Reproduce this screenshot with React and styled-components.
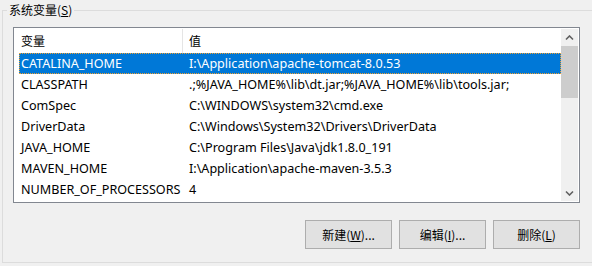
import styled, { createGlobalStyle } from 'styled-components';

const Global = createGlobalStyle`
  html, body {
    margin: 0;
    background: #f0f0f0;
    overflow: hidden;
  }
  body {
    font-family: "Noto Sans", "Noto Sans CJK SC", sans-serif;
    font-size: 12px;
    color: #000;
  }
`;

const Group = styled.fieldset`
  box-sizing: border-box;
  margin: 0 0 0 2px;
  padding: 7px 0 0 10px;
  width: 590px;
  height: 263px;
  border: 1px solid #dcdcdc;
  border-right: none;
  min-width: 0;
`;

const Legend = styled.legend`
  margin-left: -6px;
  padding: 0 2px;
  line-height: 20px;
  font-family: "Noto Sans CJK SC", sans-serif;
  font-size: 12px;
`;

const ListBox = styled.div`
  box-sizing: border-box;
  width: 567px;
  height: 176px;
  border: 1px solid #828790;
  padding: 1px;
  background: #fff;
  display: flex;
`;

const ListBody = styled.div`
  flex: 1;
  display: flex;
  flex-direction: column;
  overflow: hidden;
`;

const Header = styled.div`
  display: grid;
  grid-template-columns: 168px 1fr;
  height: 24px;
`;

const HeadCell = styled.div`
  padding-left: 6px;
  line-height: 24px;
  font-family: "Noto Sans CJK SC", sans-serif;
  border-right: ${p => (p.$sep ? '1px solid #e5e5e5' : 'none')};
  white-space: nowrap;
`;

const Row = styled.div`
  display: grid;
  grid-template-columns: 168px 1fr;
  height: 21px;
  margin-left: 4px;
  box-sizing: border-box;
  background: ${p => (p.$selected ? '#0078d7' : 'transparent')};
  color: ${p => (p.$selected ? '#fff' : '#000')};
  outline: ${p => (p.$selected ? '1px dotted #f0a030' : 'none')};
  outline-offset: -1px;
`;

const Cell = styled.div`
  padding-left: 2px;
  line-height: 21px;
  font-size: 12.6px;
  white-space: nowrap;
  overflow: hidden;
`;

const Scrollbar = styled.div`
  width: 17px;
  display: flex;
  flex-direction: column;
  background: #f0f0f0;
`;

const ArrowButton = styled.div`
  height: 17px;
  display: flex;
  align-items: center;
  justify-content: center;
`;

const Track = styled.div`
  flex: 1;
`;

const Thumb = styled.div`
  height: 52px;
  background: #cdcdcd;
`;

const Buttons = styled.div`
  width: 567px;
  margin-top: 17px;
  display: flex;
  justify-content: flex-end;
  gap: 7px;
`;

const Button = styled.button`
  box-sizing: border-box;
  width: 87px;
  height: 29px;
  padding: 0;
  border: 1px solid #adadad;
  background: #e1e1e1;
  font-family: "Noto Sans CJK SC", sans-serif;
  font-size: 12px;
  color: #000;
`;

const rows = [
  ['CATALINA_HOME', 'I:\\Application\\apache-tomcat-8.0.53'],
  ['CLASSPATH', '.;%JAVA_HOME%\\lib\\dt.jar;%JAVA_HOME%\\lib\\tools.jar;'],
  ['ComSpec', 'C:\\WINDOWS\\system32\\cmd.exe'],
  ['DriverData', 'C:\\Windows\\System32\\Drivers\\DriverData'],
  ['JAVA_HOME', 'C:\\Program Files\\Java\\jdk1.8.0_191'],
  ['MAVEN_HOME', 'I:\\Application\\apache-maven-3.5.3'],
  ['NUMBER_OF_PROCESSORS', '4'],
];

function Chevron({ down }) {
  return (
    <svg width="9" height="6" viewBox="0 0 9 6">
      <path
        d={down ? 'M1 1.5 L4.5 5 L8 1.5' : 'M1 4.5 L4.5 1 L8 4.5'}
        fill="none"
        stroke="#606060"
        strokeWidth="1.6"
      />
    </svg>
  );
}

function App() {
  return (
    <>
      <Global />
      <Group>
        <Legend>系统变量(<u>S</u>)</Legend>
        <ListBox>
          <ListBody>
            <Header>
              <HeadCell $sep>变量</HeadCell>
              <HeadCell>值</HeadCell>
            </Header>
            {rows.map((r, i) => (
              <Row key={r[0]} $selected={i === 0}>
                <Cell>{r[0]}</Cell>
                <Cell>{r[1]}</Cell>
              </Row>
            ))}
          </ListBody>
          <Scrollbar>
            <ArrowButton><Chevron /></ArrowButton>
            <Track><Thumb /></Track>
            <ArrowButton><Chevron down /></ArrowButton>
          </Scrollbar>
        </ListBox>
        <Buttons>
          <Button>新建(<u>W</u>)...</Button>
          <Button>编辑(<u>I</u>)...</Button>
          <Button>删除(<u>L</u>)</Button>
        </Buttons>
      </Group>
    </>
  );
}

export default App;
